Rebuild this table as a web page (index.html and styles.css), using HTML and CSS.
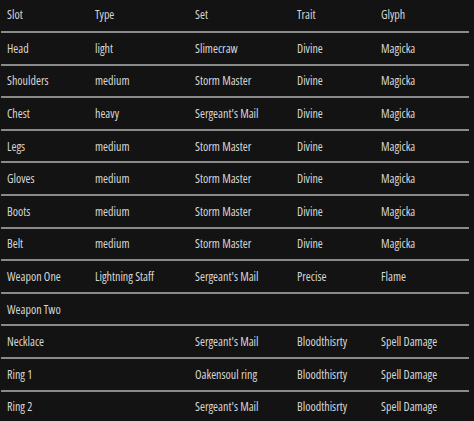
FILE: index.html
```html
<!DOCTYPE html>
<html>
<head>
<meta charset="utf-8">
<link rel="stylesheet" href="styles.css">
</head>
<body>
<table class="gear">
  <colgroup>
    <col class="c-slot"><col class="c-type"><col class="c-set"><col class="c-trait"><col class="c-glyph">
  </colgroup>
  <thead>
    <tr><th>Slot</th><th>Type</th><th>Set</th><th>Trait</th><th>Glyph</th></tr>
  </thead>
  <tbody>
    <tr><td>Head</td><td>light</td><td>Slimecraw</td><td>Divine</td><td>Magicka</td></tr>
    <tr><td>Shoulders</td><td>medium</td><td>Storm Master</td><td>Divine</td><td>Magicka</td></tr>
    <tr><td>Chest</td><td>heavy</td><td>Sergeant's Mail</td><td>Divine</td><td>Magicka</td></tr>
    <tr><td>Legs</td><td>medium</td><td>Storm Master</td><td>Divine</td><td>Magicka</td></tr>
    <tr><td>Gloves</td><td>medium</td><td>Storm Master</td><td>Divine</td><td>Magicka</td></tr>
    <tr><td>Boots</td><td>medium</td><td>Storm Master</td><td>Divine</td><td>Magicka</td></tr>
    <tr><td>Belt</td><td>medium</td><td>Storm Master</td><td>Divine</td><td>Magicka</td></tr>
    <tr><td>Weapon One</td><td>Lightning Staff</td><td>Sergeant's Mail</td><td>Precise</td><td>Flame</td></tr>
    <tr><td>Weapon Two</td><td></td><td></td><td></td><td></td></tr>
    <tr><td>Necklace</td><td></td><td>Sergeant's Mail</td><td>Bloodthisrty</td><td>Spell Damage</td></tr>
    <tr><td>Ring 1</td><td></td><td>Oakensoul ring</td><td>Bloodthisrty</td><td>Spell Damage</td></tr>
    <tr><td>Ring 2</td><td></td><td>Sergeant's Mail</td><td>Bloodthisrty</td><td>Spell Damage</td></tr>
  </tbody>
</table>
</body>
</html>
```
FILE: styles.css
```css
html, body {
  margin: 0;
  padding: 0;
  background: #131313;
}
body {
  overflow: hidden;
}
.gear {
  margin-left: 1px;
  width: 468px;
  border-collapse: collapse;
  table-layout: fixed;
  font-family: "Open Sans", Lato, sans-serif;
  font-stretch: 78%;
  font-size: 12px;
  color: #d6d6d6;
}
.c-slot { width: 88px; }
.c-type { width: 100px; }
.c-set { width: 102px; }
.c-trait { width: 84px; }
.c-glyph { width: 94px; }
.gear th, .gear td {
  text-align: left;
  font-weight: normal;
  padding: 0 0 0 6px;
  vertical-align: middle;
  white-space: nowrap;
  border-bottom: 2px solid #8a8a8a;
}
.gear th {
  height: 29px;
  padding-bottom: 2px;
}
.gear td {
  height: 30.6px;
}
.gear tbody tr:last-child td {
  border-bottom: none;
}
```
